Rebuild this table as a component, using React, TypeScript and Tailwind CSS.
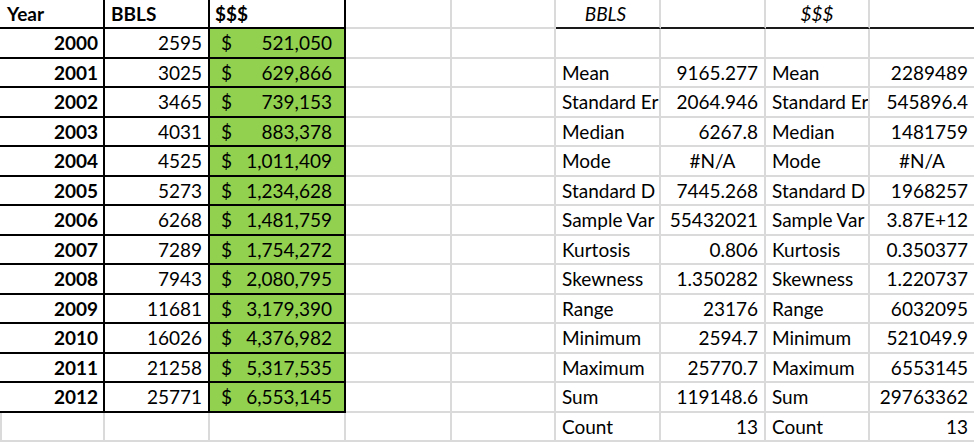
const years = [
  ['2000', '2595', '521,050'],
  ['2001', '3025', '629,866'],
  ['2002', '3465', '739,153'],
  ['2003', '4031', '883,378'],
  ['2004', '4525', '1,011,409'],
  ['2005', '5273', '1,234,628'],
  ['2006', '6268', '1,481,759'],
  ['2007', '7289', '1,754,272'],
  ['2008', '7943', '2,080,795'],
  ['2009', '11681', '3,179,390'],
  ['2010', '16026', '4,376,982'],
  ['2011', '21258', '5,317,535'],
  ['2012', '25771', '6,553,145'],
]

// labels as they show in the (narrow) sheet columns
const stats = [
  ['Mean', '9165.277', '2289489'],
  ['Standard Er', '2064.946', '545896.4'],
  ['Median', '6267.8', '1481759'],
  ['Mode', '#N/A', '#N/A'],
  ['Standard D', '7445.268', '1968257'],
  ['Sample Var', '55432021', '3.87E+12'],
  ['Kurtosis', '0.806', '0.350377'],
  ['Skewness', '1.350282', '1.220737'],
  ['Range', '23176', '6032095'],
  ['Minimum', '2594.7', '521049.9'],
  ['Maximum', '25770.7', '6553145'],
  ['Sum', '119148.6', '29763362'],
  ['Count', '13', '13'],
]

const grid = 'border-r-2 border-b-2 border-[#dadada]'
const dark = 'border-r-2 border-b-2 border-black'

function Label({ text }: { text: string }) {
  return (
    <div className={`${grid} flex items-center overflow-hidden whitespace-nowrap pl-[6px]`}>
      {text}
    </div>
  )
}

function Value({ text, last = false }: { text: string; last?: boolean }) {
  const center = text === '#N/A'
  return (
    <div
      className={`${last ? 'border-b-2 border-[#dadada]' : grid} flex items-center overflow-hidden whitespace-nowrap ${
        center ? 'justify-center' : 'justify-end pr-[6px]'
      }`}
    >
      {text}
    </div>
  )
}

function Empty({ className = '' }: { className?: string }) {
  return <div className={`${grid} ${className}`} />
}

export default function App() {
  const rows = Array.from({ length: 14 }, (_, i) => i)

  return (
    <div className="w-[974px] h-[443px] overflow-hidden bg-white font-[Lato,sans-serif] text-[19px] leading-none text-black">
      <div className="grid grid-cols-[105px_105px_136px_106px_104px_105px_105px_104px_104px] grid-rows-[29px_repeat(14,29.5px)]">
        {/* header row */}
        <div className={`${dark} flex items-center pl-[7px] font-bold`}>Year</div>
        <div className={`${dark} flex items-center pl-[6px] font-bold`}>BBLS</div>
        <div className={`${dark} flex items-center pl-[5px] font-bold`}>$$$</div>
        <Empty />
        <Empty />
        <div className="border-r-2 border-r-[#dadada] border-b-2 border-b-[#1a1a1a] flex items-center justify-center italic pr-[4px]">
          BBLS
        </div>
        <div className="border-r-2 border-r-[#dadada] border-b-2 border-b-[#1a1a1a]" />
        <div className="border-r-2 border-r-[#dadada] border-b-2 border-b-[#1a1a1a] flex items-center justify-center italic">
          $$$
        </div>
        <div className="border-b-2 border-b-[#1a1a1a]" />

        {rows.map((i) => {
          const y = years[i]
          const s = i > 0 ? stats[i - 1] : null
          return (
            <div key={i} className="contents">
              {y ? (
                <>
                  <div className={`${dark} flex items-center justify-end pr-[5px] font-bold`}>{y[0]}</div>
                  <div className={`${dark} flex items-center justify-end pr-[6px]`}>{y[1]}</div>
                  <div className={`${dark} flex items-center justify-between bg-[#92d050] pl-[11px] pr-[12px]`}>
                    <span>$</span>
                    <span>{y[2]}</span>
                  </div>
                </>
              ) : (
                <>
                  <Empty className="border-l-2" />
                  <Empty />
                  <Empty />
                </>
              )}
              <Empty />
              <Empty />
              {s ? (
                <>
                  <Label text={s[0]} />
                  <Value text={s[1]} />
                  <Label text={s[0]} />
                  <Value text={s[2]} last />
                </>
              ) : (
                <>
                  <Empty />
                  <Empty />
                  <Empty />
                  <div className="border-b-2 border-[#dadada]" />
                </>
              )}
            </div>
          )
        })}
      </div>
    </div>
  )
}
